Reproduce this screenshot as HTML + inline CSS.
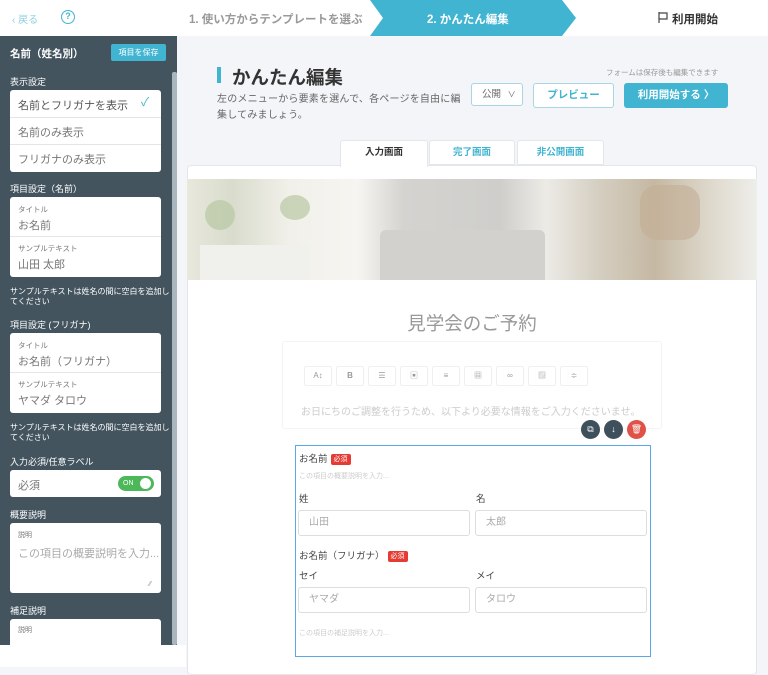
<!DOCTYPE html>
<html><head><meta charset="utf-8"><style>
*{box-sizing:border-box;margin:0;padding:0}
body{width:768px;height:667px;overflow:hidden;background:#f3f5f8;font-family:"Liberation Sans","Noto Sans CJK JP",sans-serif;position:relative;color:#333}
.a{position:absolute;white-space:nowrap}
#hdr{position:absolute;left:0;top:0;width:768px;height:36px;background:#fff}
#side{position:absolute;left:0;top:36px;width:177px;height:609px;background:#43545f}
.sl{position:absolute;color:#fff;font-size:9px;left:10px}
.box{position:absolute;left:10px;width:151px;background:#fff;border-radius:3px}
.lbl{position:absolute;left:8px;font-size:7.5px;color:#777}
.val{position:absolute;left:8px;font-size:11px;color:#777}
.note{position:absolute;left:10px;color:#fff;font-size:8px;line-height:10px}
.tb{position:absolute;top:366px;width:28px;height:20px;border:1px solid #f0f0f0;border-radius:2px;font-size:8px;color:#999;text-align:center;line-height:18px}
.inp{position:absolute;height:26px;border:1px solid #ddd;border-radius:3px;font-size:10px;color:#aaa;padding-left:10px;line-height:24px;background:#fff}
.req{display:inline-block;background:#e53b33;color:#fff;font-size:7px;padding:0 3px;border-radius:2px;line-height:11px;vertical-align:1px;margin-left:3px}
</style></head><body>
<div id="hdr"></div>
<div class="a" style="left:12px;top:11px;font-size:10px;color:#8fd0e2">‹ 戻る</div>
<div class="a" style="left:61px;top:10px;width:14px;height:14px;border:1.5px solid #40b4d0;border-radius:50%;color:#40b4d0;font-size:9px;text-align:center;line-height:11px;font-weight:bold">?</div>
<div class="a" style="left:189px;top:11px;font-size:11.5px;color:#999;font-weight:bold">1. 使い方からテンプレートを選ぶ</div>
<svg class="a" style="left:370px;top:0" width="210" height="36"><polygon points="0,0 192,0 206,18 192,36 0,36 13,18" fill="#40b4d0"/></svg>
<div class="a" style="left:427px;top:11px;font-size:11.5px;color:#fff;font-weight:bold">2. かんたん編集</div>
<svg class="a" style="left:657px;top:11px" width="12" height="13"><path d="M2 1V12M2 2H10V8H2" fill="none" stroke="#444" stroke-width="1.2"/></svg>
<div class="a" style="left:672px;top:11px;font-size:11.5px;color:#333;font-weight:bold">利用開始</div>

<div id="side"></div>
<div class="a" style="left:172px;top:72px;width:5px;height:573px;background:#aab6bd;border-radius:2px"></div>
<div class="sl" style="top:46px;font-size:10.5px;font-weight:bold">名前（姓名別）</div>
<div class="a" style="left:111px;top:44px;width:55px;height:17px;background:#40b4d0;border-radius:2px;color:#fff;font-size:8px;text-align:center;line-height:17px">項目を保存</div>
<div class="sl" style="top:75px">表示設定</div>
<div class="box" style="top:90px;height:82px">
<div class="val" style="top:7px;color:#555">名前とフリガナを表示</div><div class="a" style="left:131px;top:3px;color:#40b4d0;font-size:12px">✓</div>
<div class="a" style="left:0;top:27px;width:151px;border-top:1px solid #e5e5e5"></div>
<div class="val" style="top:34px">名前のみ表示</div>
<div class="a" style="left:0;top:54px;width:151px;border-top:1px solid #e5e5e5"></div>
<div class="val" style="top:61px">フリガナのみ表示</div></div>
<div class="sl" style="top:182px">項目設定（名前）</div>
<div class="box" style="top:197px;height:80px">
<div class="lbl" style="top:7px">タイトル</div><div class="val" style="top:20px">お名前</div>
<div class="a" style="left:0;top:39px;width:151px;border-top:1px solid #e5e5e5"></div>
<div class="lbl" style="top:46px">サンプルテキスト</div><div class="val" style="top:59px">山田 太郎</div></div>
<div class="note" style="top:287px">サンプルテキストは姓名の間に空白を追加し<br>てください</div>
<div class="sl" style="top:318px">項目設定 (フリガナ)</div>
<div class="box" style="top:333px;height:80px">
<div class="lbl" style="top:7px">タイトル</div><div class="val" style="top:20px">お名前（フリガナ）</div>
<div class="a" style="left:0;top:39px;width:151px;border-top:1px solid #e5e5e5"></div>
<div class="lbl" style="top:46px">サンプルテキスト</div><div class="val" style="top:59px">ヤマダ タロウ</div></div>
<div class="note" style="top:423px">サンプルテキストは姓名の間に空白を追加し<br>てください</div>
<div class="sl" style="top:455px">入力必須/任意ラベル</div>
<div class="box" style="top:470px;height:27px">
<div class="val" style="top:7px">必須</div>
<div class="a" style="left:108px;top:6px;width:36px;height:15px;background:#4cb85a;border-radius:8px;color:#fff;font-size:7px;line-height:15px;padding-left:5px">ON<div class="a" style="left:22px;top:2px;width:11px;height:11px;background:#fff;border-radius:50%"></div></div></div>
<div class="sl" style="top:508px">概要説明</div>
<div class="box" style="top:523px;height:70px">
<div class="lbl" style="top:7px;font-size:7px">説明</div><div class="val" style="top:22px;color:#aaa">この項目の概要説明を入力...</div>
<div class="a" style="left:139px;top:58px;color:#999;font-size:7px">⁄⁄</div></div>
<div class="sl" style="top:604px">補足説明</div>
<div class="box" style="top:619px;height:26px;border-radius:3px 3px 0 0"><div class="lbl" style="top:6px;font-size:7px">説明</div></div>
<div class="a" style="left:0;top:645px;width:186px;height:22px;background:#fff"></div>

<div class="a" style="left:217px;top:67px;width:4px;height:16px;background:#40b4d0"></div>
<div class="a" style="left:232px;top:64px;font-size:18.5px;font-weight:bold;color:#333">かんたん編集</div>
<div class="a" style="left:217px;top:92px;font-size:10px;color:#666;line-height:16px;letter-spacing:0.2px">左のメニューから要素を選んで、各ページを自由に編<br>集してみましょう。</div>
<div class="a" style="left:606px;top:67px;font-size:7.5px;color:#999">フォームは保存後も編集できます</div>
<div class="a" style="left:471px;top:83px;width:52px;height:23px;border:1px solid #a8d6e5;border-radius:3px;background:#fff;font-size:9.5px;color:#666;line-height:21px;padding-left:10px">公開 <span style="font-size:8px;margin-left:4px">∨</span></div>
<div class="a" style="left:533px;top:83px;width:81px;height:25px;border:1px solid #a8d6e5;border-radius:3px;background:#fff;font-size:10.5px;color:#40b4d0;font-weight:bold;text-align:center;line-height:23px">プレビュー</div>
<div class="a" style="left:624px;top:83px;width:104px;height:25px;background:#40b4d0;border-radius:3px;font-size:10.5px;color:#fff;font-weight:bold;text-align:center;line-height:25px">利用開始する 〉</div>

<div class="a" style="left:340px;top:140px;width:88px;height:27px;background:#fff;border:1px solid #e3e6ea;border-bottom:none;border-radius:3px 3px 0 0;font-size:9.5px;font-weight:bold;text-align:center;line-height:24px;z-index:2">入力画面</div>
<div class="a" style="left:429px;top:140px;width:86px;height:25px;background:#fff;border:1px solid #e3e6ea;border-radius:3px 3px 0 0;font-size:9.5px;font-weight:bold;color:#40b4d0;text-align:center;line-height:24px">完了画面</div>
<div class="a" style="left:517px;top:140px;width:87px;height:25px;background:#fff;border:1px solid #e3e6ea;border-radius:3px 3px 0 0;font-size:9.5px;font-weight:bold;color:#40b4d0;text-align:center;line-height:24px">非公開画面</div>
<div class="a" style="left:187px;top:165px;width:570px;height:510px;background:#fff;border:1px solid #e3e6ea;border-radius:4px"></div>
<div class="a" style="left:187px;top:179px;width:570px;height:101px;background:linear-gradient(90deg,#e8e8dc 0%,#d9dccd 8%,#f1f0ea 18%,#f6f5f1 30%,#d4d3d0 38%,#cfcecb 55%,#ecebe6 63%,#d5cfc2 72%,#c5b8a3 82%,#ded9cd 92%,#eeeeea 100%)"></div>
<div class="a" style="left:380px;top:230px;width:165px;height:50px;background:#d2d1ce;border-radius:6px 6px 0 0"></div>
<div class="a" style="left:200px;top:245px;width:110px;height:35px;background:#f0f0ec"></div>
<div class="a" style="left:205px;top:200px;width:30px;height:30px;background:#b8c7a4;border-radius:50%;opacity:.7"></div>
<div class="a" style="left:280px;top:195px;width:30px;height:25px;background:#b8c7a4;border-radius:50%;opacity:.7"></div>
<div class="a" style="left:640px;top:185px;width:60px;height:55px;background:#c3ae95;border-radius:30%;opacity:.6"></div>
<div class="a" style="left:187px;top:310px;width:570px;text-align:center;font-size:18.5px;color:#999">見学会のご予約</div>
<div class="a" style="left:282px;top:341px;width:380px;height:88px;border:1px solid #f3f3f3;border-radius:3px"></div>
<div class="tb" style="left:304px">A↕</div><div class="tb" style="left:336px;font-weight:bold">B</div><div class="tb" style="left:368px">☰</div><div class="tb" style="left:400px">▣</div><div class="tb" style="left:432px">≡</div><div class="tb" style="left:464px">▦</div><div class="tb" style="left:496px">∞</div><div class="tb" style="left:528px">▨</div><div class="tb" style="left:560px">≑</div>
<div class="a" style="left:301px;top:403px;font-size:10px;color:#ccc">お日にちのご調整を行うため、以下より必要な情報をご入力くださいませ。</div>
<div class="a" style="left:581px;top:420px;width:19px;height:19px;border-radius:50%;background:#3e505c;color:#fff;font-size:9px;text-align:center;line-height:19px">⧉</div>
<div class="a" style="left:604px;top:420px;width:19px;height:19px;border-radius:50%;background:#3e505c;color:#fff;font-size:9px;text-align:center;line-height:19px">↓</div>
<div class="a" style="left:627px;top:420px;width:19px;height:19px;border-radius:50%;background:#e05147;color:#fff;font-size:9px;text-align:center;line-height:19px">🗑</div>
<div class="a" style="left:295px;top:445px;width:356px;height:212px;border:1.5px solid #5aa8e8"></div>
<div class="a" style="left:299px;top:451px;font-size:9.5px;color:#444">お名前<span class="req">必須</span></div>
<div class="a" style="left:299px;top:471px;font-size:7px;color:#ccc">この項目の概要説明を入力...</div>
<div class="a" style="left:299px;top:491px;font-size:9.5px;color:#444">姓</div>
<div class="a" style="left:476px;top:491px;font-size:9.5px;color:#444">名</div>
<div class="inp" style="left:298px;top:510px;width:172px">山田</div>
<div class="inp" style="left:475px;top:510px;width:172px">太郎</div>
<div class="a" style="left:299px;top:548px;font-size:9.5px;color:#444">お名前（フリガナ）<span class="req">必須</span></div>
<div class="a" style="left:299px;top:568px;font-size:9.5px;color:#444">セイ</div>
<div class="a" style="left:476px;top:568px;font-size:9.5px;color:#444">メイ</div>
<div class="inp" style="left:298px;top:587px;width:172px">ヤマダ</div>
<div class="inp" style="left:475px;top:587px;width:172px">タロウ</div>
<div class="a" style="left:299px;top:628px;font-size:7px;color:#ccc">この項目の補足説明を入力...</div>
</body></html>
